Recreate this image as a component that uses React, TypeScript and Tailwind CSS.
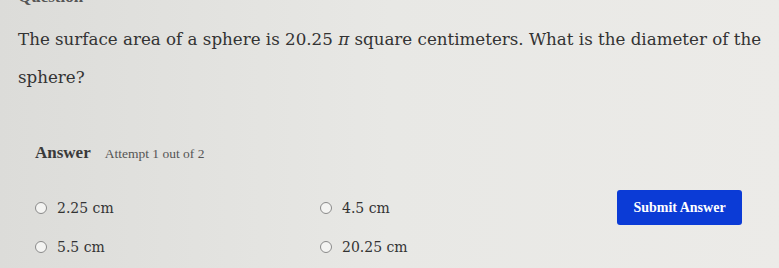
import React from "react";

function Radio({ label }: { label: string }) {
  return (
    <label className="flex items-center gap-[10px]">
      <span className="w-[12px] h-[12px] rounded-full border border-[#8a8a8a] bg-[#f4f4f2]" />
      <span className="text-[14px] text-[#333]" style={{ fontFamily: '"DejaVu Serif", serif' }}>{label}</span>
    </label>
  );
}

export default function App() {
  return (
    <div
      className="w-[779px] h-[268px] overflow-hidden bg-gradient-to-r from-[#dcdcd9] via-[#e8e8e5] to-[#ecebe8] text-[#363636]"
      style={{ fontFamily: '"Liberation Serif", "DejaVu Serif", serif' }}
    >
      <div className="pl-[18px]">
        <div className="-mt-[12px] text-[17px] text-[#555] font-bold leading-[18px]">Question</div>
        <p
          className="mt-[14px] text-[16.7px] leading-[38px] text-[#333]"
          style={{ fontFamily: '"DejaVu Serif", serif' }}
        >
          The surface area of a sphere is 20.25 <span className="italic">π</span> square centimeters. What is the diameter of the sphere?
        </p>
        <div className="mt-[44px] ml-[17px] flex items-baseline gap-[14px]">
          <span className="text-[17px] font-bold text-[#3a3a3a]">Answer</span>
          <span className="text-[13.5px] text-[#555]">Attempt 1 out of 2</span>
        </div>
        <div className="mt-[32px] ml-[17px] flex items-start">
          <div className="grid grid-cols-[285px_285px] gap-y-[18px]">
            <Radio label="2.25 cm" />
            <Radio label="4.5 cm" />
            <Radio label="5.5 cm" />
            <Radio label="20.25 cm" />
          </div>
          <button className="-mt-[8px] ml-[12px] w-[125px] h-[35px] rounded-[3px] bg-[#0b3bd6] text-white text-[14px] font-bold">
            Submit Answer
          </button>
        </div>
      </div>
    </div>
  );
}
